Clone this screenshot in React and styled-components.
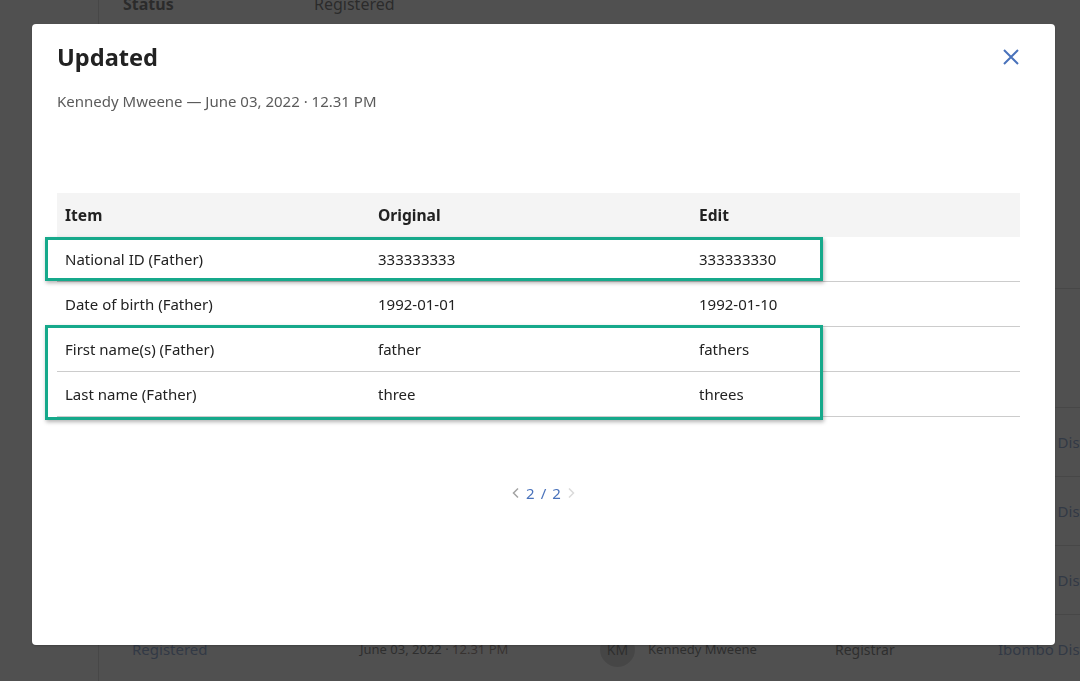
import React from 'react';
import styled, { createGlobalStyle } from 'styled-components';

const GlobalStyle = createGlobalStyle`
  * { box-sizing: border-box; }
  html, body { margin: 0; padding: 0; }
  body {
    font-family: "Noto Sans", "Open Sans", sans-serif;
    background: #ffffff;
    color: #222222;
    overflow: hidden;
  }
`;

const details = [
  ['Status', 'Registered'],
  ['Type', 'Birth'],
  ['Tracking ID', 'B7NQBYH'],
  ['Registration No', '2022785643210'],
  ['Date of event', '01 January 2022'],
  ['Place of birth', 'Ibombo, Central'],
];

const history = [
  ['Updated', 'June 03, 2022', '12.31 PM'],
  ['Validated', 'June 03, 2022', '12.31 PM'],
  ['Certified', 'June 03, 2022', '12.31 PM'],
  ['Registered', 'June 03, 2022', '12.31 PM'],
];

const changes = [
  ['National ID (Father)', '333333333', '333333330'],
  ['Date of birth (Father)', '1992-01-01', '1992-01-10'],
  ['First name(s) (Father)', 'father', 'fathers'],
  ['Last name (Father)', 'three', 'threes'],
];

// annotation boxes laid over the table, relative to its top-left corner
const highlights = [
  { top: 44, height: 44 },
  { top: 132, height: 95 },
];

function CloseIcon() {
  return (
    <svg width="16" height="16" viewBox="0 0 16 16" fill="none">
      <path d="M1 1L15 15M15 1L1 15" stroke="#4972BB" strokeWidth="2" />
    </svg>
  );
}

function Chevron({ dir, color }) {
  return (
    <svg width="7" height="12" viewBox="0 0 7 12" fill="none">
      <path
        d={dir === 'left' ? 'M6 1.5L1.5 6L6 10.5' : 'M1 1.5L5.5 6L1 10.5'}
        stroke={color}
        strokeWidth="1.5"
      />
    </svg>
  );
}

export default function App() {
  return (
    <>
      <GlobalStyle />
      <Page>
        <Sidebar />
        <Main>
          <DetailList>
            {details.map(([label, value]) => (
              <DetailRow key={label}>
                <DetailLabel>{label}</DetailLabel>
                <DetailValue>{value}</DetailValue>
              </DetailRow>
            ))}
          </DetailList>
          <History>
            <HistoryTitle>History</HistoryTitle>
            {history.map(([action, date, time]) => (
              <HistoryRow key={action}>
                <LinkText>{action}</LinkText>
                <DateText>
                  {date} · <Time>{time}</Time>
                </DateText>
                <User>
                  <Avatar>KM</Avatar>
                  Kennedy Mweene
                </User>
                <span>Registrar</span>
                <LinkText>Ibombo District</LinkText>
              </HistoryRow>
            ))}
          </History>
        </Main>
      </Page>

      <Backdrop>
        <Modal>
          <ModalBody>
            <ModalHeader>
              <Title>Updated</Title>
              <CloseButton aria-label="Close">
                <CloseIcon />
              </CloseButton>
            </ModalHeader>
            <Subtitle>Kennedy Mweene — June 03, 2022 · 12.31 PM</Subtitle>
            <TableWrap>
              <HeadRow>
                <HeadCell>Item</HeadCell>
                <HeadCell>Original</HeadCell>
                <HeadCell>Edit</HeadCell>
              </HeadRow>
              {changes.map(([item, original, edit]) => (
                <Row key={item}>
                  <Cell>{item}</Cell>
                  <Cell>{original}</Cell>
                  <Cell>{edit}</Cell>
                </Row>
              ))}
              {highlights.map((h, i) => (
                <Highlight key={i} style={{ top: h.top, height: h.height }} />
              ))}
            </TableWrap>
          </ModalBody>
          <Pagination>
            <Chevron dir="left" color="#a3a3a3" />
            <PageNums>
              <PageNum>2</PageNum>
              <PageNum>/</PageNum>
              <PageNum>2</PageNum>
            </PageNums>
            <Chevron dir="right" color="#dadada" />
          </Pagination>
        </Modal>
      </Backdrop>
    </>
  );
}

/* ---------- page behind the dialog ---------- */

const Page = styled.div`
  display: flex;
  height: 681px;
  overflow: hidden;
`;

const Sidebar = styled.div`
  width: 99px;
  flex-shrink: 0;
  border-right: 1px solid #c8c8c8;
`;

const Main = styled.div`
  flex: 1;
  padding-left: 24px;
  margin-top: -16px;
`;

const DetailList = styled.div`
  padding-bottom: 64px;
  border-bottom: 1px solid #c8c8c8;
`;

const DetailRow = styled.div`
  display: flex;
  align-items: center;
  height: 40px;
  font-size: 16px;
`;

const DetailLabel = styled.span`
  width: 191px;
  font-weight: 700;
`;

const DetailValue = styled.span``;

const History = styled.div`
  padding-top: 32px;
`;

const HistoryTitle = styled.h2`
  margin: 0;
  height: 87px;
  font-size: 20px;
  line-height: 32px;
  border-bottom: 1px solid #c8c8c8;
`;

const HistoryRow = styled.div`
  display: grid;
  grid-template-columns: 228px 240px 235px 163px 1fr;
  padding-left: 9px;
  align-items: center;
  height: 69px;
  font-size: 14px;
  white-space: nowrap;
  border-bottom: 1px solid #c8c8c8;
  color: #333333;
`;

const LinkText = styled.span`
  color: #4972bb;
  font-size: 15px;
`;

const DateText = styled.span`
  font-size: 13px;
`;

const Time = styled.span`
  color: #6b4a3e;
`;

const User = styled.span`
  display: flex;
  align-items: center;
  gap: 13px;
  font-size: 13px;
`;

const Avatar = styled.span`
  width: 35px;
  height: 35px;
  border-radius: 50%;
  background: #c4c4c4;
  display: flex;
  align-items: center;
  justify-content: center;
  font-size: 14px;
`;

/* ---------- dialog ---------- */

const Backdrop = styled.div`
  position: fixed;
  inset: 0;
  background: rgba(45, 45, 45, 0.837);
  padding: 24px 0 0 32px;
`;

const Modal = styled.div`
  width: 1023px;
  height: 621px;
  background: #ffffff;
  border-radius: 4px;
  box-shadow: 0 1px 2px rgba(0, 0, 0, 0.2);
  display: flex;
  flex-direction: column;
`;

const ModalBody = styled.div`
  padding: 17px 35px 0 25px;
`;

const ModalHeader = styled.div`
  display: flex;
  align-items: center;
  justify-content: space-between;
  height: 32px;
  margin-bottom: 16px;
`;

const Title = styled.h1`
  margin: 0;
  font-size: 23.6px;
  line-height: 32px;
  font-weight: 700;
  color: #222222;
`;

const CloseButton = styled.button`
  border: 0;
  background: none;
  padding: 0;
  display: flex;
  margin-right: 1px;
  cursor: pointer;
`;

const Subtitle = styled.p`
  margin: 0;
  font-size: 15px;
  line-height: 24px;
  color: #5b5b5b;
`;

const TableWrap = styled.div`
  position: relative;
  margin-top: 80px;
`;

const tableGrid = `
  display: grid;
  grid-template-columns: 313px 321px 1fr;
  align-items: center;
`;

const HeadRow = styled.div`
  ${tableGrid}
  height: 44px;
  background: #f4f4f4;
`;

const HeadCell = styled.div`
  padding-left: 8px;
  font-size: 15.6px;
  font-weight: 700;
  color: #222222;
`;

const Row = styled.div`
  ${tableGrid}
  height: 45px;
  border-bottom: 1px solid #cccccc;
`;

const Cell = styled.div`
  padding-left: 8px;
  font-size: 15px;
  color: #222222;
`;

const Highlight = styled.div`
  position: absolute;
  left: -12px;
  width: 778px;
  border: 3px solid #16a98b;
  box-shadow: 1px 2px 4px rgba(0, 0, 0, 0.3);
  pointer-events: none;
`;

const Pagination = styled.div`
  display: flex;
  align-items: center;
  justify-content: center;
  gap: 7px;
  margin-top: 64px;
  height: 24px;
`;

const PageNums = styled.span`
  display: flex;
  gap: 6px;
`;

const PageNum = styled.span`
  font-size: 15px;
  color: #4972bb;
`;
